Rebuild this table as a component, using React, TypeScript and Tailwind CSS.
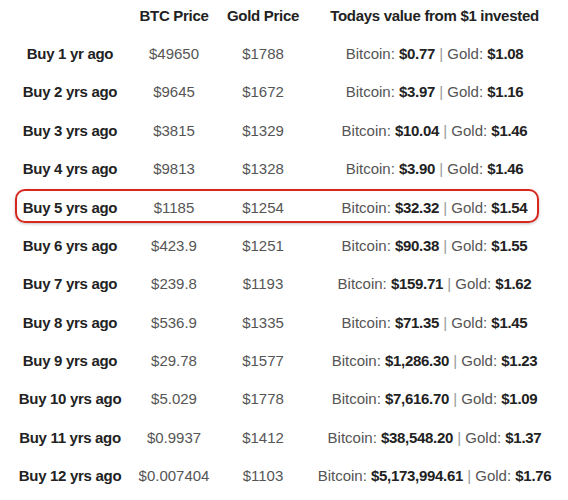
const rows = [
  { label: "Buy 1 yr ago", btc: "$49650", gold: "$1788", bv: "$0.77", gv: "$1.08" },
  { label: "Buy 2 yrs ago", btc: "$9645", gold: "$1672", bv: "$3.97", gv: "$1.16" },
  { label: "Buy 3 yrs ago", btc: "$3815", gold: "$1329", bv: "$10.04", gv: "$1.46" },
  { label: "Buy 4 yrs ago", btc: "$9813", gold: "$1328", bv: "$3.90", gv: "$1.46" },
  { label: "Buy 5 yrs ago", btc: "$1185", gold: "$1254", bv: "$32.32", gv: "$1.54", hl: true },
  { label: "Buy 6 yrs ago", btc: "$423.9", gold: "$1251", bv: "$90.38", gv: "$1.55" },
  { label: "Buy 7 yrs ago", btc: "$239.8", gold: "$1193", bv: "$159.71", gv: "$1.62" },
  { label: "Buy 8 yrs ago", btc: "$536.9", gold: "$1335", bv: "$71.35", gv: "$1.45" },
  { label: "Buy 9 yrs ago", btc: "$29.78", gold: "$1577", bv: "$1,286.30", gv: "$1.23" },
  { label: "Buy 10 yrs ago", btc: "$5.029", gold: "$1778", bv: "$7,616.70", gv: "$1.09" },
  { label: "Buy 11 yrs ago", btc: "$0.9937", gold: "$1412", bv: "$38,548.20", gv: "$1.37" },
  { label: "Buy 12 yrs ago", btc: "$0.007404", gold: "$1103", bv: "$5,173,994.61", gv: "$1.76" },
];

function Cell({ w, children, className = "" }: { w: string; children: React.ReactNode; className?: string }) {
  return <div className={`${w} flex justify-center whitespace-nowrap ${className}`}>{children}</div>;
}

export default function App() {
  return (
    <div className="w-[568px] h-[500px] bg-white overflow-hidden font-['Liberation_Sans',Arial,sans-serif] text-[15px] text-[#222]">
      <div className="flex h-[35px] pb-[3px] items-center font-semibold tracking-[-0.3px]">
        <Cell w="w-[140px]">{""}</Cell>
        <Cell w="w-[68px]">BTC Price</Cell>
        <Cell w="w-[110px]">Gold Price</Cell>
        <Cell w="w-[233px]">Todays value from $1 invested</Cell>
      </div>
      {rows.map((r) => (
        <div key={r.label} className="relative flex h-[38.4px] items-center">
          {r.hl && (
            <div className="absolute left-[15px] top-0 w-[524px] h-[34px] rounded-[10px] border-2 border-[#d8271e] shadow-[0_1px_3px_rgba(0,0,0,0.25)]" />
          )}
          <Cell w="w-[140px]" className="font-semibold tracking-[-0.3px]">{r.label}</Cell>
          <Cell w="w-[68px]" className="text-[#555]">{r.btc}</Cell>
          <Cell w="w-[110px]" className="text-[#555]">{r.gold}</Cell>
          <Cell w="w-[233px]" className="text-[#555]">
            <span>
              Bitcoin: <b className="text-[#222] tracking-[-0.3px]">{r.bv}</b>{" "}
              <span className="text-[#999]">|</span> Gold:{" "}
              <b className="text-[#222] tracking-[-0.3px]">{r.gv}</b>
            </span>
          </Cell>
        </div>
      ))}
    </div>
  );
}
